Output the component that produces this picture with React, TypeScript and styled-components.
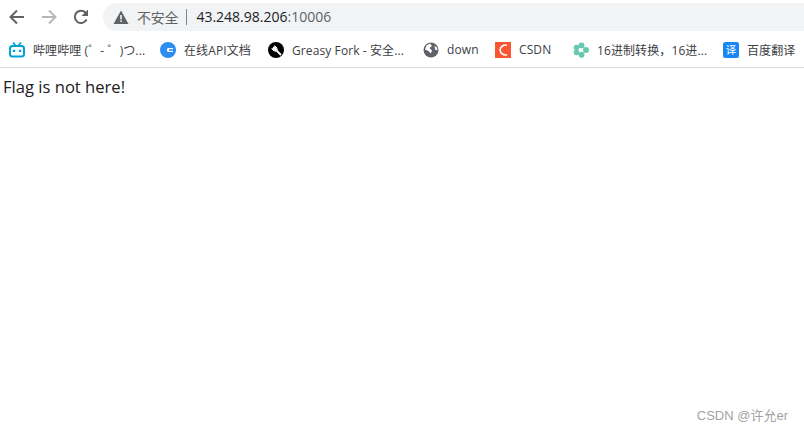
import React from "react";
import styled, { createGlobalStyle } from "styled-components";

const GlobalStyle = createGlobalStyle`
  html, body {
    margin: 0;
    padding: 0;
    background: #fff;
    overflow: hidden;
  }
  body {
    font-family: "Open Sans", "Noto Sans CJK SC", sans-serif;
  }
`;

const Page = styled.div`
  position: relative;
  width: 804px;
  height: 432px;
`;

const Toolbar = styled.div`
  display: flex;
  align-items: center;
  height: 34px;
  padding-left: 7px;
  box-sizing: border-box;
`;

const NavButton = styled.div`
  display: flex;
  width: 20px;
  height: 20px;
  margin-right: 12px;
`;

const Omnibox = styled.div`
  display: flex;
  align-items: center;
  flex: 1;
  height: 28px;
  padding-left: 10px;
  background: #f1f3f4;
  border-radius: 14px 0 0 14px;
`;

const Warning = styled.svg`
  width: 16px;
  height: 16px;
  margin-right: 8px;
`;

const Insecure = styled.span`
  font-size: 14px;
  color: #5f6368;
  font-family: "Noto Sans CJK SC", sans-serif;
  letter-spacing: -0.2px;
`;

const Divider = styled.span`
  width: 1px;
  height: 16px;
  margin: 0 9px 0 8px;
  background: #80868b;
`;

const Host = styled.span`
  font-size: 14px;
  margin-bottom: 2px;
  color: #202124;
`;

const Port = styled.span`
  font-size: 14px;
  margin-bottom: 2px;
  color: #5f6368;
`;

const Bookmarks = styled.div`
  display: flex;
  align-items: center;
  height: 34px;
  padding: 0 0 2px 9px;
  box-sizing: border-box;
  border-bottom: 1px solid #dadce0;
`;

const Bookmark = styled.div<{ $width: number }>`
  display: flex;
  align-items: center;
  flex: none;
  width: ${(p) => p.$width}px;
  overflow: hidden;
`;

const FavIcon = styled.svg`
  flex: none;
  width: 16px;
  height: 16px;
  margin-right: 8px;
`;

const Label = styled.span`
  font-size: 12px;
  letter-spacing: 0.1px;
  color: #3c4043;
  white-space: nowrap;
  font-family: "Open Sans", "Noto Sans CJK SC", sans-serif;
`;

const Message = styled.p`
  margin: 0;
  padding: 7px 0 0 3px;
  font-size: 16.6px;
  line-height: 24px;
  color: #202124;
  font-family: "Open Sans", sans-serif;
`;

const Watermark = styled.span`
  position: absolute;
  right: 16px;
  top: 405px;
  font-size: 13px;
  color: #a3a3a3;
  font-family: "Liberation Sans", "Noto Sans CJK SC", sans-serif;
`;

function Back() {
  return (
    <svg viewBox="0 0 20 20" fill="none" stroke="#5f6368" strokeWidth="2">
      <path d="M17 10H4M10 3.500L3.500 10l6.500 6.500" />
    </svg>
  );
}

function Forward() {
  return (
    <svg viewBox="0 0 20 20" fill="none" stroke="#b4b6b9" strokeWidth="2">
      <path d="M3 10h13M10 3.500l6.500 6.500-6.500 6.500" />
    </svg>
  );
}

function Reload() {
  return (
    <svg viewBox="0 0 20 20" fill="none">
      <path d="M15.600 12.500a6.200 6.200 0 1 1-.6-6.300" stroke="#5f6368" strokeWidth="2" />
      <path d="M17 2.500V9h-6.500z" fill="#5f6368" />
    </svg>
  );
}

const items = [
  {
    label: "哔哩哔哩 (゜- ゜)つ...",
    width: 151,
    icon: (
      <>
        <path d="M4 .5l3 3.500M12 .5L9 4" stroke="#00a1d6" strokeWidth="1.700" />
        <rect x="1" y="4" width="14" height="10.500" rx="2.500" fill="none" stroke="#00a1d6" strokeWidth="2" />
        <path d="M3.800 8.800h2.400M9.800 8.800h2.400" stroke="#00a1d6" strokeWidth="2.200" />
      </>
    ),
  },
  {
    label: "在线API文档",
    width: 108,
    icon: (
      <>
        <circle cx="8" cy="8" r="8" fill="#2b8ef0" />
        <path d="M13 6H8.700a2 2 0 0 0 0 4H13z" fill="#fff" />
        <rect x="9" y="7.200" width="7" height="1.600" fill="#2b8ef0" />
      </>
    ),
  },
  {
    label: "Greasy Fork - 安全...",
    width: 155,
    icon: (
      <>
        <circle cx="8" cy="8" r="8" fill="#000" />
        <path d="M8.500 8.500L13 13" stroke="#fff" strokeWidth="1.800" />
        <path d="M4 6.500L7.500 10 10 7.500 6.500 4" fill="#fff" />
        <path d="M3.500 6.500l2.800 2.800M5 5l2.800 2.800M6.500 3.500l2.800 2.800" stroke="#fff" strokeWidth="1" />
      </>
    ),
  },
  {
    label: "down",
    width: 72,
    icon: (
      <>
        <circle cx="8" cy="8" r="7.500" fill="#5f6368" />
        <path d="M7 1.500L9 4 6.500 6 9 8.500 7.800 11.500 5.500 9 2 7.500 3.500 3.500zM11.500 4l2.500 1.500 .5 3-2.500-1z" fill="#fff" />
      </>
    ),
  },
  {
    label: "CSDN",
    width: 78,
    icon: (
      <>
        <rect width="16" height="16" fill="#fc5531" />
        <path d="M12 3.300A5.500 5.500 0 0 0 5 8a5.500 5.500 0 0 0 7 4.700" fill="none" stroke="#fff" strokeWidth="1.600" />
      </>
    ),
  },
  {
    label: "16进制转换，16进...",
    width: 150,
    icon: (
      <>
        <circle cx="8.500" cy="3.500" r="3" fill="#68c7ae" />
        <circle cx="3.500" cy="5.500" r="2.800" fill="#68c7ae" />
        <circle cx="13" cy="8" r="3" fill="#68c7ae" />
        <circle cx="3.500" cy="10.500" r="2.800" fill="#68c7ae" />
        <circle cx="8.500" cy="12.800" r="3" fill="#68c7ae" />
        <circle cx="8" cy="8" r="1.700" fill="#fff" />
      </>
    ),
  },
  {
    label: "百度翻译",
    width: 80,
    icon: (
      <>
        <rect width="16" height="16" rx="2.500" fill="#1787f5" />
        <text x="8" y="12" fontSize="10.500" textAnchor="middle" fill="#fff" fontFamily="Noto Sans CJK SC">
          译
        </text>
      </>
    ),
  },
];

export default function App() {
  return (
    <Page>
      <GlobalStyle />
      <Toolbar>
        <NavButton>
          <Back />
        </NavButton>
        <NavButton>
          <Forward />
        </NavButton>
        <NavButton>
          <Reload />
        </NavButton>
        <Omnibox>
          <Warning viewBox="0 0 16 16">
            <path d="M8 1.500L15.500 15H.5z" fill="#5f6368" />
            <path d="M7.200 6h1.600v4.500H7.200zM7.200 11.500h1.600V13H7.200z" fill="#f1f3f4" />
          </Warning>
          <Insecure>不安全</Insecure>
          <Divider />
          <Host>43.248.98.206</Host>
          <Port>:10006</Port>
        </Omnibox>
      </Toolbar>
      <Bookmarks>
        {items.map((item) => (
          <Bookmark key={item.label} $width={item.width}>
            <FavIcon viewBox="0 0 16 16">{item.icon}</FavIcon>
            <Label>{item.label}</Label>
          </Bookmark>
        ))}
      </Bookmarks>
      <Message>Flag is not here!</Message>
      <Watermark>CSDN @许允er</Watermark>
    </Page>
  );
}
